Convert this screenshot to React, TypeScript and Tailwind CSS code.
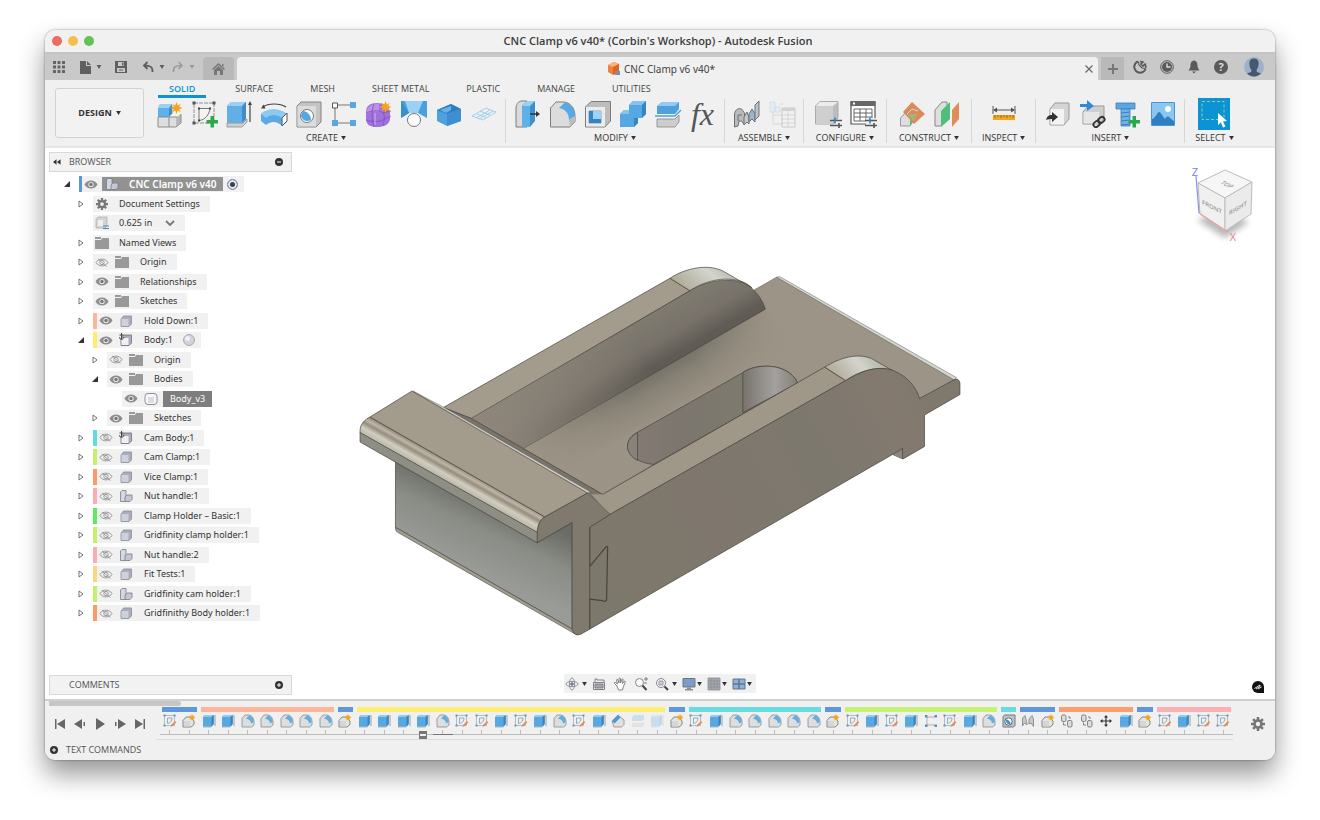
import React from 'react';

type IconProps = { className?: string };

const Svg: React.FC<{ box?: string; className?: string; children: React.ReactNode }> = ({ box = '0 0 28 28', className = 'h-7 w-7', children }) => (
  <svg viewBox={box} className={`block shrink-0 ${className}`} fill="none" aria-hidden="true">
    {children}
  </svg>
);

const Star: React.FC<{ x: number; y: number; s?: number }> = ({ x, y, s = 1 }) => (
  <path
    transform={`translate(${x} ${y}) scale(${s})`}
    d="M0-6 1.3-2.6 4.3-4.3 2.7-1.3 6 0 2.7 1.3 4.3 4.3 1.3 2.6 0 6-1.3 2.6-4.3 4.3-2.7 1.3-6 0-2.7-1.3-4.3-4.3-1.3-2.6Z"
    fill="#f5a31a"
  />
);

const Caret: React.FC<IconProps> = ({ className = 'h-1 w-[5px] text-[#333]' }) => (
  <svg viewBox="0 0 6 5" className={`block shrink-0 ${className}`} aria-hidden="true">
    <path d="M0 0h6L3 5z" fill="currentColor" />
  </svg>
);

/* ---------- Ribbon icons ---------- */

const NewComponentIcon = () => (
  <Svg>
    <path d="M14 17V8h2l2-3v9l5 0v9l-4 4H3V17z" fill="#c9c9c9" />
    <path d="M3 8C3 6 4 4 6 4h11l-3 4z" fill="#9bd0f2" />
    <path d="M3 8h11v9H3z" fill="#5fb0e8" />
    <path d="M14 8v9l3-3V4z" fill="#3f8ecb" />
    <path d="M3 17h18v10H3z" fill="#dedede" />
    <path d="m14 17 3-3h9l-4 3z" fill="#f2f2f2" />
    <path d="m22 17 4-3v8l-5 5z" fill="#b5b5b5" />
    <path d="M3 17v10h18l5-4v-9M14 17v10M3 17h19" stroke="#8c8c8c" />
    <Star x={21.5} y={8} />
  </Svg>
);

const SketchIcon = () => (
  <Svg>
    <path d="M4 3h20v20H4z" stroke="#777" strokeWidth=".8" strokeDasharray="4 1" />
    <path d="M2.500 1.500h3v3h-3zM22.500 1.500h3v3h-3zM2.500 21.500h3v3h-3z" fill="#555" />
    <path d="M9 8.500v12C15 20 19 15 20 8.500z" fill="#f4f4f4" stroke="#777" />
    <path d="M8 7.500h2v2H8zM19 7.500h2v2h-2zM8 19.500h2v2H8z" fill="#444" />
    <path d="M20.500 16h3.500v4h4v3.500h-4v4h-3.500v-4h-4V20h4z" fill="#2ba84a" />
  </Svg>
);

const ExtrudeIcon = () => (
  <Svg>
    <path d="M2 23h16l4-4v3l-5 5H2z" fill="#cfcfcf" stroke="#8e8e8e" strokeWidth=".8" />
    <path d="M2 6 6 2h15v17l-4 4H2z" fill="#62afe6" />
    <path d="M2 6 6 2h15l-4 4z" fill="#9ad0f3" />
    <path d="M17 6v17l4-4V2z" fill="#3f8ecb" />
    <path d="M25 22V4" stroke="#444" strokeWidth="1.200" />
    <path d="m25 1 2 4h-4z" fill="#444" />
  </Svg>
);

const RevolveIcon = () => (
  <Svg>
    <path d="M1 14C7 8 20 8 27 14v8l-5 4c-5-5-11-5-16-1l-5-4z" fill="#5aaae4" />
    <path d="M1 14C7 8 20 8 27 14l-5 4c-5-4-11-4-16 0z" fill="#8ec9f2" />
    <path d="m22 18 5-5v8l-5 5z" fill="#fff" stroke="#555" />
    <path d="M3 7C8 3 20 3 26 7" stroke="#444" strokeWidth="1.200" />
    <path d="M1 8.500 3.500 4.500l2 4z" fill="#444" />
  </Svg>
);

const HoleIcon = () => (
  <Svg>
    <path d="M2 6 6 2h20v20l-5 5H2z" fill="#c4c4c4" stroke="#858585" />
    <path d="M2.500 6H21v20.500H2.500z" fill="#dcdcdc" />
    <circle cx="12" cy="16" r="6.500" fill="#fff" stroke="#777" />
    <path d="M8 11c4 0 8 4 8 9-5 3-10-1-10-5z" fill="#56a7e2" />
  </Svg>
);

const PatternIcon = () => (
  <Svg>
    <path d="M5 5h18M5 5v18M5 23h18" stroke="#777" />
    <path d="M2.500 3h5v5h-5z" fill="#fff" stroke="#555" />
    <path d="M20 2h6v6h-6zM2 20h6v6H2zM20 20h6v6h-6z" fill="#5aa6e0" />
  </Svg>
);

const FormIcon = () => (
  <Svg>
    <path d="M1 12c0-6 4-9 11-9s12 3 13 9v8c-2 5-6 7-13 7S2 25 1 20z" fill="#a272dc" />
    <path d="M2 10c2-5 7-7 12-6v8c-5-1-9 0-13 2z" fill="#ba92e8" />
    <path d="M1 13c7-3 14-3 17 0s0 11 0 13M9 4c-3 6-2 16 0 23M1 20c6 2 14 2 17 0l8-4M18 13l8-2" stroke="#7a4cb8" strokeWidth=".7" />
    <path d="M10 13v12" stroke="#cfaef2" />
    <Star x={20.500} y={7} />
  </Svg>
);

const SheetIcon = () => (
  <Svg>
    <path d="M1 1h26v17L18 13H9l-8 5z" fill="#4a9fdd" />
    <path d="M5 1h18l-5 12H9z" fill="#9ad1f4" />
    <path d="M1 1v17l8-5z" fill="#3b8ecd" />
    <circle cx="14" cy="20" r="6.500" fill="#fff" stroke="#777" />
  </Svg>
);

const BossIcon = () => (
  <Svg>
    <path d="m2 10 14-6 10 5v12L12 26 2 21z" fill="#4fa0dc" />
    <path d="m2 10 14-6 10 5-14 5z" fill="#2f7fc0" />
    <path d="m5 10 11-4v4l-5 3z" fill="#69b3e8" />
    <path d="m12 14 14-5v12l-14 5z" fill="#3c8fd0" />
  </Svg>
);

const GridPatternIcon = () => (
  <Svg>
    <path d="m2 16 14-8 10 4-13 8zM6 13.500l10 4M10 11l10 4M6 18l14-8M9 19l14-8" stroke="#9bcbec" strokeWidth=".9" />
  </Svg>
);

const PressPullIcon = () => (
  <Svg>
    <path d="M2 7C3 3 5 1 8 1h5v26H2z" fill="#dadada" stroke="#7d7d7d" />
    <path d="M8 6 13 1h8v20l-5 6H8z" fill="#3f8fce" />
    <path d="M8 6h8v21H8z" fill="#5fb0e8" />
    <path d="M8 6 13 1h8l-5 5z" fill="#9bd0f3" />
    <path d="M16 14h7" stroke="#333" strokeWidth="1.300" />
    <path d="m22 11 4 3-4 3z" fill="#333" />
  </Svg>
);

const FilletIcon = () => (
  <Svg>
    <path d="M1.500 8 7 2h7c7 0 12 6 12 14v6l-5 5H1.500z" fill="#dcdcdc" stroke="#7d7d7d" />
    <path d="M10 8 16 2.500C23 4 26 10 26 16l-6 4c0-7-4-11-10-12z" fill="#56a9e4" />
    <path d="M20 20l6-4v6l-5 5z" fill="#bcbcbc" />
  </Svg>
);

const ShellIcon = () => (
  <Svg>
    <path d="M1.500 7 7 1.500h19.500V21L21 27H1.500z" fill="#bdbdbd" stroke="#7d7d7d" />
    <path d="M2 7h19v19.500H2z" fill="#ececec" />
    <path d="M5 11h12v12H5z" fill="#fff" stroke="#888" strokeWidth=".8" />
    <path d="M5 11h4v8h8v4H5z" fill="#2f86c8" />
    <path d="M9 11h8v8H9z" fill="#9fd3f5" />
  </Svg>
);

const CombineIcon = () => (
  <Svg>
    <path d="M10 5 14 1h13v13l-4 4h-4v5l-4 4H1V14l4-4h5z" fill="#56a8e2" />
    <path d="M10 5 14 1h13l-4 4zM1 14l4-4h5v4z" fill="#86c4ef" />
    <path d="M23 5v13l4-4V1zM15 18v9l4-4v-5z" fill="#3585c6" />
  </Svg>
);

const SplitIcon = () => (
  <Svg>
    <path d="M3 6 8 2h17v7l-4 5H3z" fill="#4fa0dd" />
    <path d="M3 6 8 2h17l-4 4z" fill="#93ccf2" />
    <path d="M1 16h20l6-6" stroke="#4fa0dd" strokeWidth="1.500" />
    <path d="M3 19h18l4-4v7l-4 5H3z" fill="#cdcdcd" stroke="#858585" strokeWidth=".8" />
  </Svg>
);

const FxIcon = () => <span className="font-['Liberation_Serif',serif] text-[32px] leading-7 text-[#555] italic">fx</span>;

const JointIcon = () => (
  <Svg>
    <path d="M1.500 27V14c1-5 4-6 7-5l3 4v12l-3-4H6l-1 5z" fill="#b8bcbf" stroke="#6d7073" />
    <path d="M5 21v-6h4" stroke="#6d7073" />
    <path d="m11 17 3-5 2 6v6l-2-2-3 3z" fill="#c6cacd" stroke="#6d7073" />
    <path d="m16 14 3-5 3 5v8l-3-3-3 3z" fill="#9db6ca" stroke="#6d7073" />
    <path d="m22 5 4-4v15l-4 4z" fill="#b9c4cc" stroke="#6d7073" />
  </Svg>
);

const TableFadedIcon = () => (
  <Svg>
    <g opacity=".45">
      <path d="M5 8v16h9M5 15h9M12 4h3" stroke="#bbb" />
      <path d="M2 2h5v10H2zM7 7h5v5H7z" fill="#d5e6f4" stroke="#9dbfda" strokeWidth=".7" />
      <path d="M14 8h13v19H14z" fill="#f2f2f2" stroke="#999" />
      <path d="M14 8h13v3H14z" fill="#aaa" />
      <path d="M14 15h13M14 19h13M14 23h13M20 11v16" stroke="#999" strokeWidth=".7" />
    </g>
  </Svg>
);

const Sliders = () => (
  <>
    <path d="M16 20.500h12M16 25.500h12" stroke="#555" strokeWidth="1.300" />
    <path d="M21 17.500v6" stroke="#2c87c8" strokeWidth="1.600" />
    <path d="M25 23v5" stroke="#555" strokeWidth="1.600" />
  </>
);

const ConfigBoxIcon = () => (
  <Svg>
    <path d="M1.500 6 6 1.500h18V18l-5 6H1.500z" fill="#bdbdbd" stroke="#aaa" />
    <path d="M2 6h17v18H2z" fill="#cfcfcf" />
    <path d="M2 6 6 2h18l-5 4z" fill="#ececec" />
    <Sliders />
  </Svg>
);

const ConfigTableIcon = () => (
  <Svg>
    <path d="M2 2h24v22H2z" fill="#fff" stroke="#555" strokeWidth="1.200" />
    <path d="M1.500 1h25v5h-25z" fill="#666" />
    <path d="M4 2.500h2v2H4z" fill="#fff" />
    <path d="M5 9h18v12H5zM5 13h18M5 17h18M11 9v12M17 9v12" stroke="#666" />
    <path d="M17 18h11v10H17z" fill="#f0f0f0" />
    <Sliders />
  </Svg>
);

const PlaneIcon = () => (
  <Svg>
    <path d="M2.500 18 7 13h8v8l-3 5H2.500z" fill="#dedede" stroke="#999" />
    <path d="M12 17v9l3-4v-8z" fill="#54c27f" />
    <path d="M14 2 27 14 16 24 5 12z" fill="#dd8a5a" />
    <path d="M9 14h10l-3 7z" fill="#8fbf8f" opacity=".75" />
    <path d="M9 14 14 9l6 2" stroke="#c8e0c8" />
  </Svg>
);

const MidplaneIcon = () => (
  <Svg>
    <path d="M2 10 9 2h5v18l-6 6H2z" fill="#dedede" stroke="#888" />
    <path d="M8 11 17 2v17l-9 8z" fill="#4dbf7b" />
    <path d="m19 10 7-8v17l-7 8z" fill="#e08b58" />
  </Svg>
);

const MeasureIcon = () => (
  <Svg>
    <path d="M3 6v8M25 6v8M4 10h20" stroke="#555" />
    <path d="m3 10 4-2.500v5zM25 10l-4-2.500v5z" fill="#555" />
    <path d="M3 15h22v5H3z" fill="#f2a51f" />
    <path d="M5 15v3M8 15v2M11 15v3M14 15v2M17 15v3M20 15v2M23 15v3" stroke="#8a5a08" strokeWidth=".8" />
  </Svg>
);

const InsertBoxIcon = () => (
  <Svg>
    <path d="m6 9 5-6h14v16l-5 6H6z" fill="#d4d4d4" stroke="#999" />
    <path d="M6.500 9H20v15.500H6.500z" fill="#f3f3f3" />
    <path d="M2 20c1-4 3-5 6-5v-3l6 5-6 5v-3c-2 0-4 0-6 1z" fill="#333" />
  </Svg>
);

const InsertLinkIcon = () => (
  <Svg>
    <path d="m4 12 5-6h16v12l-4 6H4z" fill="#cfcfcf" stroke="#999" />
    <path d="M4.500 12H20v11.500H4.500z" fill="#e6e6e6" />
    <path d="M1 4h7V0l7 6-7 5V7H1z" fill="#2f8bd8" />
    <g transform="rotate(-40 20 22)" stroke="#333" strokeWidth="1.800">
      <rect x="13.500" y="19.500" width="7" height="5" rx="2.500" />
      <rect x="19.500" y="19.500" width="7" height="5" rx="2.500" />
    </g>
  </Svg>
);

const FastenerIcon = () => (
  <Svg>
    <path d="M2 3h19v6H2z" fill="#5aa6e0" stroke="#3b7fb8" strokeWidth=".8" />
    <path d="M7 9h9v17H7z" fill="#6db3e6" stroke="#3b7fb8" strokeWidth=".8" />
    <path d="m7 13 9-1M7 17l9-1M7 21l9-1M7 25l9-1" stroke="#3b7fb8" />
    <path d="M18.500 16h3.500v4h4v3.500h-4v4h-3.500v-4h-4V20h4z" fill="#2ba84a" />
  </Svg>
);

const CanvasIcon = () => (
  <Svg>
    <path d="M2.500 2.500h23v23h-23z" fill="#8ac6f2" stroke="#4b96cf" />
    <circle cx="19" cy="9" r="3" fill="#fff" />
    <path d="M3 19c4-1 5-7 7-7s4 5 6 7c2-3 3-3 5-1l4 3v4H3z" fill="#2f80c2" />
  </Svg>
);

const SelectIcon = () => (
  <span className="flex h-8 w-8 items-center justify-center bg-[#0c93d6]">
    <Svg box="0 0 32 32" className="h-8 w-8">
      <path d="M4 3.500h22v18H4z" stroke="#8fd18a" strokeDasharray="3 2" />
      <path d="m20 15 9 8-4 .5 2.500 5-2.500 1-2-5-3 2.500z" fill="#fff" />
    </Svg>
  </span>
);

/* ---------- Small icons ---------- */

const Eye: React.FC<{ off?: boolean }> = ({ off }) => (
  <svg viewBox="0 0 14 9" className="h-[9px] w-[14px]" fill="none" aria-hidden="true">
    {off ? (
      <>
        <path d="M1 4.500C3.500 0 10.500 0 13 4.500 10.500 9 3.500 9 1 4.500Z" stroke="#9b9b9b" />
        <circle cx="7" cy="4.500" r="2.200" stroke="#9b9b9b" />
        <path d="m3 1 8.500 7.500" stroke="#9b9b9b" />
      </>
    ) : (
      <>
        <path d="M.5 4.500C3-.8 11-.8 13.500 4.500 11 9.800 3 9.800.5 4.500Z" fill="#8e8e8e" />
        <circle cx="7" cy="4.500" r="2.600" fill="#eee" />
        <circle cx="7" cy="4.500" r="1.700" fill="#777" />
      </>
    )}
  </svg>
);

const Gear: React.FC<IconProps> = ({ className = 'h-3 w-3' }) => (
  <svg viewBox="-8 -8 16 16" className={className} aria-hidden="true">
    <circle r="4" fill="none" stroke="#777" strokeWidth="3" />
    <path d="M0-8v4M0 8V4M-8 0h4M8 0H4M-5.600-5.600-3-3M5.600 5.600 3 3M-5.600 5.600-3 3M5.600-5.600 3-3" stroke="#777" strokeWidth="3" />
  </svg>
);

const Folder = () => (
  <svg viewBox="0 0 14 12" className="h-3 w-[14px]" aria-hidden="true">
    <path d="M0 0h6v2H0zM7 1h7v11H0V3h6z" fill="#999" />
  </svg>
);

const Cube: React.FC<{ anchor?: boolean }> = ({ anchor }) => (
  <svg viewBox="0 0 14 14" className="h-[14px] w-[14px]" fill="none" aria-hidden="true">
    <path d="M2 5 4.500 2h8v8L10 12.500H2z" fill="#a9adbc" stroke={anchor ? '#6f6f76' : '#888c9a'} strokeWidth=".8" />
    <path d="M2.500 5H9.500v7h-7z" fill={anchor ? '#f0f0f2' : '#ced1dc'} />
    {anchor && <path d="M2.500 0v6M.5 2h4M0 4c.5 3 4.500 3 5 0" stroke="#444" />}
  </svg>
);

const Assembly = () => (
  <svg viewBox="0 0 14 14" className="h-[14px] w-[14px]" fill="none" aria-hidden="true">
    <path d="M1.500 3 3 1.500h4v11H1.500z" fill="#d5d8e0" stroke="#787c88" strokeWidth=".8" />
    <path d="M6 8 8 6h5v4.500L11 12.500H6z" fill="#c3c7d3" stroke="#787c88" strokeWidth=".8" />
  </svg>
);

const BodyShape = () => (
  <svg viewBox="0 0 14 14" className="h-[14px] w-[14px]" fill="none" aria-hidden="true">
    <rect x="1" y="1.500" width="12" height="11" rx="3" fill="#f8f8fa" stroke="#8e8e96" />
    <path d="M4 5h6v6H4z" fill="#dcdde3" />
  </svg>
);

const ConfigSmall = () => (
  <svg viewBox="0 0 14 14" className="h-[14px] w-[14px]" fill="none" aria-hidden="true">
    <path d="M1 3 3 1h9v9l-2 2H1z" fill="#d3d3d3" stroke="#b2b2b2" strokeWidth=".8" />
    <path d="M3 4h5v6H3z" fill="#efefef" />
    <path d="M8 10h6M8 12.500h6" stroke="#4c86b5" />
  </svg>
);

const Twist: React.FC<{ open?: boolean }> = ({ open }) => (
  <svg viewBox="0 0 8 8" className="h-2 w-2" fill="none" aria-hidden="true">
    {open ? <path d="M7 1v6H1z" fill="#333" /> : <path d="M2 1v6l4-3z" stroke="#666" strokeWidth=".9" />}
  </svg>
);

/* ---------- Timeline icons ---------- */

const tl = 'h-[14px] w-[14px]';

const TlSketch = () => (
  <Svg box="0 0 14 14" className={tl}>
    <path d="M1.500 1.500h10v10h-10z" stroke="#9db0bf" strokeWidth=".8" />
    <path d="M.5.500h2v2h-2zM10.500.500h2v2h-2zM.5 10.500h2v2h-2z" fill="#6f93ad" />
    <path d="M4.500 4h4.500C9 7 7.500 9 4.500 9.500z" stroke="#7b9cb5" strokeWidth=".8" />
    <path d="m7.500 13 1-2.500L12 7l1.300 1.300-3.500 3.700z" fill="#ea8a52" />
  </Svg>
);

const TlComp = () => (
  <Svg box="0 0 14 14" className={tl}>
    <path d="M1 6.500 4 3h4l4 4v3.500L9 13H1z" fill="#e4e4e4" stroke="#7a7a7a" strokeWidth=".9" />
    <path d="M2 7h6v5.500H2z" fill="#d6d6d6" />
    <Star x={10} y={3.500} s={0.6} />
  </Svg>
);

const TlExtrude = () => (
  <Svg box="0 0 14 14" className={tl}>
    <path d="M1 12h8l2-2v1l-2 2.500H1z" fill="#b5b5b5" />
    <path d="M1 3 3 1h9v9l-2.500 2.500H1z" fill="#58a9e2" />
    <path d="M1 3 3 1h9l-2.500 2z" fill="#8fcbf2" />
    <path d="M9.500 3 11.500 1v9l-2 2.500z" fill="#3c83bc" />
    <path d="M13 1v11" stroke="#888" strokeWidth=".8" />
  </Svg>
);

const TlFillet = () => (
  <Svg box="0 0 14 14" className={tl}>
    <path d="M1 4.500 4 1h3.500C11 1 13 4.500 13 8v3l-2.500 2H1z" fill="#dedede" stroke="#8a8a8a" strokeWidth=".8" />
    <path d="M5 4.500 8 1.500C11 2 12.800 5 12.800 8L10 9.500C10 7 8 5 5 4.500z" fill="#62aee2" />
  </Svg>
);

const TlChamfer = () => (
  <Svg box="0 0 14 14" className={tl}>
    <path d="m1 7 6-6 6 5v4.500L10.500 13H3z" fill="#e1e1e1" stroke="#8a8a8a" strokeWidth=".8" />
    <path d="m1 7 6-6 2.500 2.500L3.500 9.500z" fill="#4a9bd8" />
  </Svg>
);

const TlSplit = () => (
  <Svg box="0 0 14 14" className="h-[14px] w-[14px] opacity-25">
    <path d="M1 3 3 1h10v4l-2 2H1z" fill="#5ab0e8" />
    <path d="M1 9h10l2-2v4l-2 2H1z" fill="#bbb" />
  </Svg>
);

const TlFaded = () => (
  <div className="opacity-25">
    <TlExtrude />
  </div>
);

const TlPattern = () => (
  <Svg box="0 0 14 14" className={tl}>
    <path d="M3 3h8M3 3v8h8" stroke="#999" strokeWidth=".7" />
    <path d="M1 1h2.500v2.500H1zM10.500 1H13v2.500h-2.500zM1 10.500h2.500V13H1zM10.500 10.500H13V13h-2.500z" fill="#5f8fb8" />
  </Svg>
);

const TlHole = () => (
  <Svg box="0 0 14 14" className={tl}>
    <path d="M1 2.500 2.500 1H13v10.500L11.500 13H1z" fill="#bcc3c9" stroke="#70787e" />
    <circle cx="6.500" cy="7.500" r="3.700" fill="#fff" stroke="#60686e" />
    <path d="M4 5.500c2 0 5 2 4.500 5-3 0-5-2-4.500-5z" fill="#4a90c8" />
  </Svg>
);

const TlJoint = () => (
  <Svg box="0 0 14 14" className={tl}>
    <path d="M1.500 12V4L4 1.500 6 9v2L3.500 9zM8 10V5l3-3.500L12.500 5v7.500L10 9z" fill="#c9c9c9" stroke="#808080" strokeWidth=".8" />
  </Svg>
);

const TlLink = () => (
  <Svg box="0 0 14 14" className={tl}>
    <rect x="1.500" y="1" width="4.500" height="6.500" rx="1.500" fill="#ddd" stroke="#777" strokeWidth=".9" />
    <rect x="7.500" y="6.500" width="4.500" height="6.500" rx="1.500" fill="#ddd" stroke="#777" strokeWidth=".9" />
    <path d="M3.500 8.500V11H6M8 3h2v2" stroke="#777" strokeWidth=".9" />
  </Svg>
);

const TlMove = () => (
  <Svg box="0 0 14 14" className={tl}>
    <path d="M7 2v10M2 7h10" stroke="#333" strokeWidth="1.200" />
    <path d="m7 1 2 2.500H5zM7 13l2-2.500H5zM1 7l2.500-2v4zM13 7l-2.500-2v4z" fill="#333" />
  </Svg>
);

/* ---------- Data ---------- */

const ribbonTabs = ['SOLID', 'SURFACE', 'MESH', 'SHEET METAL', 'PLASTIC', 'MANAGE', 'UTILITIES'];

const ribbonGroups: { name: string; pad: string; icons: [string, React.FC][] }[] = [
  {
    name: 'CREATE',
    pad: 'px-1',
    icons: [
      ['New Component', NewComponentIcon],
      ['Create Sketch', SketchIcon],
      ['Extrude', ExtrudeIcon],
      ['Revolve', RevolveIcon],
      ['Hole', HoleIcon],
      ['Rectangular Pattern', PatternIcon],
      ['Create Form', FormIcon],
      ['Flange', SheetIcon],
      ['Boss', BossIcon],
      ['Geometric Pattern', GridPatternIcon],
    ],
  },
  {
    name: 'MODIFY',
    pad: 'px-1',
    icons: [
      ['Press Pull', PressPullIcon],
      ['Fillet', FilletIcon],
      ['Shell', ShellIcon],
      ['Combine', CombineIcon],
      ['Split Body', SplitIcon],
      ['Change Parameters', FxIcon],
    ],
  },
  { name: 'ASSEMBLE', pad: 'px-1', icons: [['Joint', JointIcon], ['Drive Joints', TableFadedIcon]] },
  { name: 'CONFIGURE', pad: 'px-[6px]', icons: [['Configure', ConfigBoxIcon], ['Configuration Table', ConfigTableIcon]] },
  { name: 'CONSTRUCT', pad: 'px-[7px]', icons: [['Offset Plane', PlaneIcon], ['Midplane', MidplaneIcon]] },
  { name: 'INSPECT', pad: 'px-[10px]', icons: [['Measure', MeasureIcon]] },
  {
    name: 'INSERT',
    pad: 'px-1',
    icons: [
      ['Insert Derive', InsertBoxIcon],
      ['Insert Link', InsertLinkIcon],
      ['Insert Fastener', FastenerIcon],
      ['Canvas', CanvasIcon],
    ],
  },
  { name: 'SELECT', pad: 'px-[10px]', icons: [['Select', SelectIcon]] },
];

type Node = {
  label: string;
  depth: 1 | 2 | 3;
  twist?: 'open' | 'closed';
  bar?: string;
  eye?: 'on' | 'off';
  icon: React.FC;
  selected?: boolean;
  sphere?: boolean;
  units?: boolean;
};

const Anchored = () => <Cube anchor />;

const nodes: Node[] = [
  { label: 'Document Settings', depth: 1, twist: 'closed', icon: Gear },
  { label: '0.625 in', depth: 1, icon: ConfigSmall, units: true },
  { label: 'Named Views', depth: 1, twist: 'closed', icon: Folder },
  { label: 'Origin', depth: 1, twist: 'closed', eye: 'off', icon: Folder },
  { label: 'Relationships', depth: 1, twist: 'closed', eye: 'on', icon: Folder },
  { label: 'Sketches', depth: 1, twist: 'closed', eye: 'on', icon: Folder },
  { label: 'Hold Down:1', depth: 1, twist: 'closed', bar: 'bg-[#fcb59c]', eye: 'on', icon: Cube },
  { label: 'Body:1', depth: 1, twist: 'open', bar: 'bg-[#fcee6c]', eye: 'on', icon: Anchored, sphere: true },
  { label: 'Origin', depth: 2, twist: 'closed', eye: 'off', icon: Folder },
  { label: 'Bodies', depth: 2, twist: 'open', eye: 'on', icon: Folder },
  { label: 'Body_v3', depth: 3, eye: 'on', icon: BodyShape, selected: true },
  { label: 'Sketches', depth: 2, twist: 'closed', eye: 'on', icon: Folder },
  { label: 'Cam Body:1', depth: 1, twist: 'closed', bar: 'bg-[#5fdce0]', eye: 'off', icon: Anchored },
  { label: 'Cam Clamp:1', depth: 1, twist: 'closed', bar: 'bg-[#c3f26a]', eye: 'off', icon: Cube },
  { label: 'Vice Clamp:1', depth: 1, twist: 'closed', bar: 'bg-[#fd9a68]', eye: 'off', icon: Cube },
  { label: 'Nut handle:1', depth: 1, twist: 'closed', bar: 'bg-[#fbadb1]', eye: 'off', icon: Assembly },
  { label: 'Clamp Holder – Basic:1', depth: 1, twist: 'closed', bar: 'bg-[#5cec5c]', eye: 'off', icon: Cube },
  { label: 'Gridfinity clamp holder:1', depth: 1, twist: 'closed', bar: 'bg-[#c3f26a]', eye: 'off', icon: Cube },
  { label: 'Nut handle:2', depth: 1, twist: 'closed', bar: 'bg-[#fbadb1]', eye: 'off', icon: Assembly },
  { label: 'Fit Tests:1', depth: 1, twist: 'closed', bar: 'bg-[#fcd67c]', eye: 'off', icon: Cube },
  { label: 'Gridfinity cam holder:1', depth: 1, twist: 'closed', bar: 'bg-[#c3f26a]', eye: 'off', icon: Assembly },
  { label: 'Gridfinithy Body holder:1', depth: 1, twist: 'closed', bar: 'bg-[#fd9a68]', eye: 'off', icon: Cube },
];

const indent = { 1: 'pl-[29px]', 2: 'pl-[43px]', 3: 'pl-[58px]' };

// s sketch, c component, e extrude, f fillet, h chamfer, x/y suppressed, p pattern, o hole, j joint, l link, m move
const segments = [
  { color: 'bg-[#5e97dc]', steps: 'sc' },
  { color: 'bg-[#fdb59c]', steps: 'eefffff' },
  { color: 'bg-[#5e97dc]', steps: 'c' },
  { color: 'bg-[#fbee70]', steps: 'eeeefssesefsehxy' },
  { color: 'bg-[#5e97dc]', steps: 'c' },
  { color: 'bg-[#68dde0]', steps: 'sefffff' },
  { color: 'bg-[#5e97dc]', steps: 'c' },
  { color: 'bg-[#c5f273]', steps: 'sesepsef' },
  { color: 'bg-[#68dde0]', steps: 'o' },
  { color: 'bg-[#5e97dc]', steps: 'jc' },
  { color: 'bg-[#fd9e6c]', steps: 'llme' },
  { color: 'bg-[#5e97dc]', steps: 'c' },
  { color: 'bg-[#fbb0b3]', steps: 'sess' },
];

const stepIcons: Record<string, React.FC> = {
  s: TlSketch,
  c: TlComp,
  e: TlExtrude,
  f: TlFillet,
  h: TlChamfer,
  x: TlSplit,
  y: TlFaded,
  p: TlPattern,
  o: TlHole,
  j: TlJoint,
  l: TlLink,
  m: TlMove,
};

const MARKER = 13;

/* ---------- Sections ---------- */

const TitleBar = () => (
  <header className="relative flex h-6 shrink-0 items-center border-b-2 border-[#c4c4c4] bg-[#f1f1f1] px-[7px]">
    <div className="flex gap-[6px]">
      <button aria-label="Close window" className="h-[10px] w-[10px] rounded-full bg-[#ec6a5e]" />
      <button aria-label="Minimize window" className="h-[10px] w-[10px] rounded-full bg-[#f4bf4f]" />
      <button aria-label="Zoom window" className="h-[10px] w-[10px] rounded-full bg-[#61c454]" />
    </div>
    <h1 className="flex-1 pr-[46px] text-center text-[11px] leading-4 font-semibold text-[#3c3c3c]">
      CNC Clamp v6 v40* (Corbin's Workshop) - Autodesk Fusion
    </h1>
  </header>
);

const DocumentBar = () => (
  <div className="flex h-[26px] shrink-0 items-end bg-[#c9c9c9]">
    <div className="flex h-[26px] w-[158px] shrink-0 items-center gap-[5px] pl-2">
      <button aria-label="Data panel" className="mr-[10px]">
        <Svg box="0 0 12 12" className="h-3 w-3">
          <path d="M0 0h3v3H0zM4.500 0h3v3h-3zM9 0h3v3H9zM0 4.500h3v3H0zM4.500 4.500h3v3h-3zM9 4.500h3v3H9zM0 9h3v3H0zM4.500 9h3v3h-3zM9 9h3v3H9z" fill="#666" />
        </Svg>
      </button>
      <button aria-label="File" className="mr-2 flex items-center gap-[5px]">
        <Svg box="0 0 11 13" className="h-[13px] w-[11px]">
          <path d="M0 0h6v5h5v8H0zM7 0l4 4H7z" fill="#5f5f5f" />
        </Svg>
        <Caret className="h-1 w-[6px] text-[#5f5f5f]" />
      </button>
      <button aria-label="Save" className="mr-[10px]">
        <Svg box="0 0 12 12" className="h-3 w-3">
          <path d="M0 0h12v12H0z" fill="#5f5f5f" />
          <path d="M3 1h6v4H3zM2 7h8v4H2z" fill="#c9c9c9" />
          <path d="M7 1.500h1.500v3H7zM4 8.500h4v1H4z" fill="#5f5f5f" />
        </Svg>
      </button>
      <button aria-label="Undo" className="flex items-center gap-[5px]">
        <Svg box="0 0 12 12" className="h-3 w-3">
          <path d="M10.500 11C11 6 8 4.500 3 4.500M5.500 1 2 4.500 5.500 8" stroke="#5f5f5f" strokeWidth="1.800" />
        </Svg>
        <Caret className="h-1 w-[6px] text-[#5f5f5f]" />
      </button>
      <button aria-label="Redo" className="ml-[2px] flex items-center gap-[5px]">
        <Svg box="0 0 12 12" className="h-3 w-3">
          <path d="M1.500 11C1 6 4 4.500 9 4.500M6.500 1 10 4.500 6.500 8" stroke="#9a9a9a" strokeWidth="1.500" />
        </Svg>
        <Caret className="h-1 w-[6px] text-[#9a9a9a]" />
      </button>
    </div>
    <button aria-label="Home" className="mr-[3px] flex h-[23px] w-[31px] shrink-0 items-center justify-center rounded-t-sm bg-[#b9b9b9]">
      <Svg box="0 0 13 12" className="h-3 w-[13px]">
        <path d="M6.500 0 13 6l-1 1-5.500-5L1 7 0 6zM10 1h1.500v3L10 2.500zM2 7l4.500-4L11 7v5H8V8H5v4H2z" fill="#777" />
      </Svg>
    </button>
    <div className="flex h-[23px] flex-1 items-center rounded-t-sm bg-[#f0f0f0] pr-[5px]">
      <div className="flex flex-1 items-center justify-center gap-1">
        <Svg box="0 0 13 13" className="h-[13px] w-[13px]">
          <path d="m1 3 6-3 5 2v8l-6 3-5-3z" fill="#f0803c" />
          <path d="m1 3 6-3 5 2-6 3z" fill="#fbb27c" />
          <path d="m6 5 6-3v8l-6 3z" fill="#de6420" />
          <path d="M8 9h5v4H8z" fill="#7b8fa6" />
        </Svg>
        <span className="font-['Noto_Sans',sans-serif] text-[10px] leading-4 text-[#444]">CNC Clamp v6 v40*</span>
      </div>
      <button aria-label="Close tab">
        <Svg box="0 0 8 8" className="h-2 w-2">
          <path d="m.5.500 7 7M7.500.500l-7 7" stroke="#666" strokeWidth="1.200" />
        </Svg>
      </button>
    </div>
    <button aria-label="New tab" className="ml-[3px] flex h-[23px] w-[23px] items-center justify-center bg-[#b9b9b9]">
      <Svg box="0 0 10 10" className="h-[10px] w-[10px]">
        <path d="M5 0v10M0 5h10" stroke="#777" strokeWidth="2" />
      </Svg>
    </button>
    <div className="flex h-[26px] w-[151px] items-center gap-[13px] pl-[9px]">
      <button aria-label="Extensions">
        <Svg box="0 0 14 14" className="h-[14px] w-[14px]">
          <path d="M5 1.500a5.800 5.800 0 1 0 7.500 7.500" stroke="#5a5a5a" strokeWidth="2" />
          <path d="M12.700 8A6 6 0 0 0 12 4l-2 2-2-2 2-2a6 6 0 0 0-3-.5" stroke="#5a5a5a" strokeWidth="1.600" />
          <path d="M5.500 1.500 6 5l3 3 3.500.5" stroke="#5a5a5a" strokeWidth="1.200" />
        </Svg>
      </button>
      <button aria-label="Job status">
        <Svg box="0 0 14 14" className="h-[14px] w-[14px]">
          <circle cx="7" cy="7" r="6.300" stroke="#5a5a5a" />
          <circle cx="7" cy="7" r="5" fill="#5a5a5a" />
          <path d="M7 3.500V7h3.500" stroke="#ddd" strokeWidth="1.400" />
        </Svg>
      </button>
      <button aria-label="Notifications">
        <Svg box="0 0 14 14" className="h-[14px] w-[14px]">
          <path d="M7 .5c3 .5 3.500 3 3.500 5S11.500 9 12.500 10.500h-11C2.500 9 3.500 7.500 3.500 5.500S4 1 7 .5ZM5 11.500h4l-2 2z" fill="#5a5a5a" />
        </Svg>
      </button>
      <button aria-label="Help" className="mr-[3px] flex h-[14px] w-[14px] items-center justify-center rounded-full bg-[#5a5a5a] text-[11px] leading-[14px] font-bold text-[#ddd]">
        ?
      </button>
      <button aria-label="Account">
        <Svg box="0 0 20 20" className="h-5 w-5">
          <circle cx="10" cy="10" r="10" fill="#9db1cc" />
          <path d="M10 1.500c4 0 5 3 4.500 6.500-.3 3-1.500 4-2 5l.5 2 4 1.500c-4 4-10 4-14 0L7 15l.5-2c-1-1-1.700-2-2-5C5 4.500 6 1.500 10 1.500Z" fill="#46586f" />
        </Svg>
      </button>
    </div>
  </div>
);

const Ribbon = () => (
  <div className="flex h-[68px] shrink-0 border-b-2 border-[#e6e6e6] bg-[#f0f0f0]">
    <button className="mt-2 mr-[3px] ml-[10px] flex h-[50px] w-[89px] shrink-0 items-center justify-center gap-1 rounded-[3px] border border-[#d2d2d2] bg-[#f2f2f2] text-[9px] font-bold text-[#333]">
      DESIGN <Caret />
    </button>
    <div className="flex-1">
      <nav className="flex gap-[15px] pl-[11px]">
        {ribbonTabs.map((tab, i) => (
          <a
            key={tab}
            href="#"
            className={`block h-[18px] border-b-[3px] px-[11px] pt-[3px] text-[9px] leading-3 whitespace-nowrap first:mr-[3px] ${
              i === 0 ? 'border-[#0d93d2] font-semibold text-[#0d93d2]' : 'border-transparent text-[#444]'
            }`}
          >
            {tab}
          </a>
        ))}
      </nav>
      <div className="mt-px flex h-[44px]">
        {ribbonGroups.map(({ name, pad, icons }) => (
          <section key={name} className={`flex shrink-0 flex-col items-center border-r border-[#d6d6d6] last:border-r-0 ${pad}`}>
            <div className="flex h-[30px]">
              {icons.map(([label, Icon]) => (
                <button key={label} aria-label={label} className="flex h-[30px] w-[35px] items-center justify-center">
                  <Icon />
                </button>
              ))}
            </div>
            <button className="mt-[3px] flex items-center gap-[3px] text-[9px] leading-3 whitespace-nowrap text-[#333]">
              {name} <Caret />
            </button>
          </section>
        ))}
      </div>
    </div>
  </div>
);

const TreeRow: React.FC<{ node: Node }> = ({ node }) => {
  const Icon = node.icon;
  return (
    <li className={`flex h-4 items-center ${indent[node.depth]}`}>
      {node.twist ? (
        <button aria-label={`Toggle ${node.label}`} className="mr-[5px] flex w-[14px] justify-center">
          <Twist open={node.twist === 'open'} />
        </button>
      ) : (
        <span className="mr-[5px] w-[14px]" />
      )}
      <div className={`flex h-4 items-center bg-[#f1f1f1] ${node.selected ? '' : 'pr-[10px]'}`}>
        {node.bar && <span className={`h-4 w-1 ${node.bar}`} />}
        {node.eye && (
          <button aria-label={`Visibility of ${node.label}`} className="flex w-[17px] justify-center">
            <Eye off={node.eye === 'off'} />
          </button>
        )}
        <span className={`flex justify-center ${node.eye ? 'w-[23px]' : 'mr-[2px] w-[17px]'}`}>
          <Icon />
        </span>
        {node.units ? (
          <label className="flex items-center pl-[7px]">
            <select aria-label="Configuration size" className="w-[46px] appearance-none">
              <option>{node.label}</option>
            </select>
            <Svg box="0 0 10 6" className="h-[6px] w-[10px]">
              <path d="m1 1 4 4 4-4" stroke="#777" strokeWidth="1.800" />
            </Svg>
          </label>
        ) : (
          <span className={node.selected ? 'ml-px h-4 bg-[#7e7e7e] px-[7px] text-white' : 'pl-[7px]'}>{node.label}</span>
        )}
        {node.sphere && (
          <Svg box="0 0 12 12" className="-mr-1 ml-[10px] h-3 w-3">
            <circle cx="6" cy="6" r="5.500" fill="#d0d2dc" stroke="#9a9ca6" strokeWidth=".8" />
            <circle cx="4.500" cy="4.500" r="2.500" fill="#f0f0f6" />
          </Svg>
        )}
      </div>
    </li>
  );
};

const Browser = () => (
  <aside className="relative z-10 flex w-[247px] flex-col justify-between pt-1 pb-1 text-[#333]">
    <div>
      <div className="ml-1 flex h-5 items-center border border-[#d9d9d9] bg-[#f2f2f2] px-[3px] text-[9px] text-[#555]">
        <button aria-label="Collapse browser">
          <Svg box="0 0 9 6" className="h-[6px] w-2">
            <path d="M4 0v6L0 3zM8.500 0v6l-4-3z" fill="#333" />
          </Svg>
        </button>
        <h2 className="flex-1 pl-2">BROWSER</h2>
        <button aria-label="Hide browser" className="mr-[5px]">
          <Svg box="0 0 8 8" className="h-2 w-2">
            <circle cx="4" cy="4" r="4" fill="#333" />
            <path d="M2 4h4" stroke="#fff" />
          </Svg>
        </button>
      </div>
      <ul className="mt-1 flex h-[445px] flex-col justify-between font-['Noto_Sans',sans-serif] text-[9px] leading-4 whitespace-nowrap">
        <li className="flex h-4 items-center pl-[15px]">
          <button aria-label="Toggle document" className="mr-[5px] flex w-[14px] justify-center">
            <Twist open />
          </button>
          <div className="flex h-4 items-center bg-[#f1f1f1] pr-[6px]">
            <span className="h-4 w-[3px] bg-[#5b95d8]" />
            <button aria-label="Visibility of document" className="mr-[2px] flex w-[18px] justify-center">
              <Eye />
            </button>
            <span className="flex h-[14px] items-center bg-[#929292] pr-[6px] pl-[3px] text-[10px] leading-[14px] font-semibold text-white">
              <Assembly />
              <span className="pl-[10px]">CNC Clamp v6 v40</span>
            </span>
            <input
              type="radio"
              defaultChecked
              aria-label="Activate document"
              className="ml-1 h-[11px] w-[11px] appearance-none rounded-full border border-[#8f94a8] bg-[#3b4054] shadow-[inset_0_0_0_2px_#e8eaf2]"
            />
          </div>
        </li>
        {nodes.map((node, i) => (
          <TreeRow key={i} node={node} />
        ))}
      </ul>
    </div>
    <div className="ml-1 flex h-5 items-center border border-[#d9d9d9] bg-[#f2f2f2] pr-2 pl-[19px] text-[9px] text-[#555]">
      <h2 className="flex-1">COMMENTS</h2>
      <button aria-label="Expand comments">
        <PlusDot />
      </button>
    </div>
  </aside>
);

const PlusDot = () => (
  <Svg box="0 0 8 8" className="h-2 w-2">
    <circle cx="4" cy="4" r="4" fill="#333" />
    <path d="M2 4h4M4 2v4" stroke="#fff" />
  </Svg>
);

const edge = '#47443e';

const Model = () => (
  <svg viewBox="45 148 1230 552" className="absolute inset-0 h-full w-full" fill="none" role="img" aria-label="Clamp body">
    <defs>
      <linearGradient id="floor" gradientUnits="userSpaceOnUse" x1="640" y1="381" x2="662" y2="420">
        <stop offset="0" stopColor="#777368" />
        <stop offset=".4" stopColor="#8a8478" />
        <stop offset="1" stopColor="#9b9385" />
      </linearGradient>
      <linearGradient id="floorFade" gradientUnits="userSpaceOnUse" x1="690" y1="352" x2="770" y2="306">
        <stop offset="0" stopColor="#9b9385" stopOpacity="0" />
        <stop offset="1" stopColor="#9c9587" />
      </linearGradient>
      <linearGradient id="floorLeft" gradientUnits="userSpaceOnUse" x1="530" y1="455" x2="630" y2="397">
        <stop offset="0" stopColor="#9c9587" />
        <stop offset="1" stopColor="#9b9385" stopOpacity="0" />
      </linearGradient>
      <linearGradient id="wall" gradientUnits="userSpaceOnUse" x1="600" y1="344" x2="624" y2="385">
        <stop offset="0" stopColor="#7f7b70" />
        <stop offset=".55" stopColor="#78726a" />
        <stop offset="1" stopColor="#605c55" />
      </linearGradient>
      <linearGradient id="wallFade" gradientUnits="userSpaceOnUse" x1="480" y1="440" x2="640" y2="350">
        <stop offset="0" stopColor="#8f877c" />
        <stop offset="1" stopColor="#8f877c" stopOpacity="0" />
      </linearGradient>
      <linearGradient id="round" gradientUnits="userSpaceOnUse" x1="456" y1="467" x2="447" y2="483">
        <stop offset="0" stopColor="#968f81" />
        <stop offset=".2" stopColor="#bdb6a6" />
        <stop offset=".38" stopColor="#958e80" />
        <stop offset=".65" stopColor="#d2cdbc" />
        <stop offset="1" stopColor="#b6b5ad" />
      </linearGradient>
      <linearGradient id="front" gradientUnits="userSpaceOnUse" x1="480" y1="495" x2="450" y2="560">
        <stop offset="0" stopColor="#6b6c66" />
        <stop offset=".45" stopColor="#8a8c86" />
        <stop offset="1" stopColor="#989b96" />
      </linearGradient>
      <linearGradient id="hump" x1="0" y1=".6" x2="1" y2=".3">
        <stop offset="0" stopColor="#aca593" />
        <stop offset=".55" stopColor="#d3d5cd" />
        <stop offset="1" stopColor="#a6a89f" />
      </linearGradient>
      <linearGradient id="side" gradientUnits="userSpaceOnUse" x1="590" y1="600" x2="960" y2="400">
        <stop offset="0" stopColor="#7d786c" />
        <stop offset=".35" stopColor="#7f776d" />
        <stop offset=".65" stopColor="#7d786e" />
        <stop offset=".85" stopColor="#83796f" />
        <stop offset="1" stopColor="#7e786d" />
      </linearGradient>
      <linearGradient id="slotEnd" gradientUnits="userSpaceOnUse" x1="743" y1="0" x2="797" y2="0">
        <stop offset="0" stopColor="#79736d" />
        <stop offset=".6" stopColor="#a3a19f" />
        <stop offset="1" stopColor="#858079" />
      </linearGradient>
      <linearGradient id="slotWall" gradientUnits="userSpaceOnUse" x1="637" y1="0" x2="743" y2="0">
        <stop offset="0" stopColor="#837a74" />
        <stop offset=".4" stopColor="#7c766e" />
        <stop offset="1" stopColor="#7d7a6e" />
      </linearGradient>
    </defs>
    <g stroke={edge} strokeWidth=".7" strokeLinejoin="round">
      {/* base plate */}
      <path d="M755 290 777 277.500 956 379.500 920 399 820 372 654 465 602.500 495 523 449 640 370Z" fill="url(#floor)" />
      <path d="M755 290 777 277.500 956 379.500 920 399 820 372 654 465 602.500 495 523 449 640 370Z" fill="url(#floorFade)" stroke="none" />
      <path d="M755 290 820 372 654 465 602.500 495 523 449 640 370Z" fill="url(#floorLeft)" stroke="none" />
      <path d="M777 277.500Q779 276 782 278L957 378 955 380.500Z" fill="#d4d5cf" strokeWidth=".4" />
      {/* slot */}
      <path d="M654 465C640 464 627 456 627.500 446 628 440 632 436 637 433L743 373C752 366 775 363 789 373 795 377 798 382 797 384Z" fill="url(#slotWall)" />
      <path d="M743 373C752 366 775 363 789 373 795 377 798 382 797 384L743 413Z" fill="url(#slotEnd)" />
      <path d="M637.500 433v28C631 458 627 452 627.500 446 628 440 632 436 637.500 433Z" fill="#87827a" />
      {/* left rail */}
      <path d="M443 408 670 278.500 690 291 471 419Z" fill="#a39b8b" />
      <path d="M670 278.500C684 269 710 262 727 273.500L752 288C740 276 712 276 690 291Z" fill="url(#hump)" />
      <path d="M471 419 690 291C709 279 738 276 751 287.500 758 294 763 301 765.500 309.500L523 449Z" fill="url(#wall)" />
      <path d="M471 419 690 291 690 353 523 449Z" fill="url(#wallFade)" stroke="none" />
      {/* chamfer behind the jaw */}
      <path d="M443 408 471 419 523 449 602.500 495 610 514 588 493Z" fill="#78746a" />
      {/* right rail */}
      <path d="M602.500 495 825 367.500 846 381 610 515 591 495Z" fill="#9f9788" stroke="none" />
      <path d="M602.500 495 825 367.500 846 381 610 515" />
      <path d="M825 367.500C840 358 858 353 872 359L893 371C880 366 862 370 846 381Z" fill="url(#hump)" />
      <path
        d="M589.500 630V528L610 515 846 381C862 371 880 365 895 371.500 908 377 917 388 920 399L955 380Q959 378 960.500 383.500V395L925 415.500V447L903.500 459.500 893 455Z"
        fill="url(#side)"
      />
      <path d="M893 455 903 449v10.500" fill="#8b857a" />
      <path d="M589.500 528v39.500L605.500 548Q608 545.500 607.500 549L606.500 600Q606 603.500 602.500 601.500L589.500 600V630" strokeWidth="1.200" />
      {/* jaw */}
      <path d="M395 461V528L572 630V523L537 543Z" fill="url(#front)" />
      <path d="M395 528Q394.500 532 398 533.500L577 636 572 630Z" fill="#a29d92" strokeWidth=".6" />
      <path d="M587.500 493.500 610 515 589.500 528V630L581 635Q577 637 573.500 634L572 630V523L537 543.500V533C537 526 541 519 544.500 517.500Z" fill="#7f796e" />
      <path d="M359.500 432.500 537 532.500V543.500L359.500 442.500Z" fill="#8f8e84" />
      <path d="M369.500 417.500 544.500 517.500C540 520 537 526 537 533L359.500 433C359 425 364 420 369.500 417.500Z" fill="url(#round)" />
      <path d="M411.500 391.500 587.500 493.500 544.500 517.500 369.500 417.500Z" fill="#a39c8c" />
      <path d="M412.500 391.500 444 408 591 493 587.500 493.500Z" fill="#d0cfc8" strokeWidth=".4" />
    </g>
  </svg>
);

const ViewCube = () => (
  <svg viewBox="0 0 80 90" className="absolute top-[10px] right-[10px] h-[90px] w-[80px]" role="img" aria-label="View cube">
    <defs>
      <filter id="soft" x="-50%" y="-50%" width="200%" height="200%">
        <feGaussianBlur stdDeviation="3" />
      </filter>
    </defs>
    <path d="m12 62 26-10 26 12-24 16z" fill="#000" opacity=".28" filter="url(#soft)" />
    <path d="m13 25 27-13 27 12-27 16z" fill="#f6f6f6" stroke="#bdbdbd" />
    <path d="m13 25 27 15v33L15 56z" fill="#f0f0f0" stroke="#bdbdbd" />
    <path d="m67 24-27 16v33l26-17z" fill="#ebebeb" stroke="#bdbdbd" />
    <path d="M11 18 14 55" stroke="#8d8ee8" strokeWidth="1.200" />
    <path d="M14 55 43 74" stroke="#e8a0a0" strokeWidth="1.200" />
    <g fontFamily="Open Sans, sans-serif" fontSize="6" fontWeight="600" fill="#999" textAnchor="middle">
      <text transform="translate(40 28) rotate(25) skewX(-30)">TOP</text>
      <text transform="translate(27 51) skewY(27)">FRONT</text>
      <text transform="translate(53 52) skewY(-30)">RIGHT</text>
    </g>
    <g fontFamily="Open Sans, sans-serif" fontSize="11" textAnchor="middle">
      <text x="10" y="18" fill="#7b7ce0">Z</text>
      <text x="48" y="83" fill="#f08080">X</text>
    </g>
  </svg>
);

const NavBar = () => (
  <div className="absolute bottom-[6px] left-1/2 flex h-[19px] -translate-x-1/2 items-center gap-[7px] bg-[#f1f1f1] pr-1 pl-px">
    <button aria-label="Orbit" className="-mr-[2px] flex items-center gap-[3px]">
      <Svg box="0 0 14 14" className="h-[14px] w-[14px]">
        <ellipse cx="7" cy="7" rx="6" ry="2.600" stroke="#8b93a2" />
        <ellipse cx="7" cy="7" rx="2.600" ry="6" stroke="#8b93a2" />
        <path d="M7 5v4M5 7h4" stroke="#555" />
      </Svg>
      <Caret />
    </button>
    <button aria-label="Look at">
      <Svg box="0 0 14 14" className="h-[14px] w-[14px]">
        <path d="M1.500 5.500h11v7h-11zM3 5V2h2v1h7v2" stroke="#7f7f88" />
        <path d="M3 7h8v4H3z" fill="#a4a4ae" stroke="#7f7f88" />
      </Svg>
    </button>
    <button aria-label="Pan">
      <Svg box="0 0 14 14" className="h-[14px] w-[14px]">
        <path d="M4 9 1.500 6.500Q1 5 2.500 5.500L4.500 7 3.500 3Q4 1.500 5 3l1 3V1.500Q7 .5 7.500 1.500V6L9 2Q10 1.500 10 2.500L9.500 6.500 11.500 4Q13 4 12 5.500L10.500 9.500 9.500 13H5.500z" fill="#fff" stroke="#777" strokeWidth=".9" />
      </Svg>
    </button>
    <button aria-label="Zoom">
      <Svg box="0 0 14 14" className="h-[14px] w-[14px]">
        <circle cx="5.500" cy="5.500" r="4" fill="#f8f8fa" stroke="#888" />
        <path d="m8.500 8.500 4 4.500" stroke="#444" strokeWidth="2" />
        <path d="M12 0v4M10 2h4M10 6h3" stroke="#666" strokeWidth=".8" />
      </Svg>
    </button>
    <button aria-label="Fit" className="-mr-[2px] flex items-center gap-[3px]">
      <Svg box="0 0 14 14" className="h-[14px] w-[14px]">
        <circle cx="6" cy="6" r="4.500" fill="#f8f8fa" stroke="#888" />
        <path d="M4 4h4v4H4z" fill="#ccd" stroke="#99a" />
        <path d="m9.500 9.500 3.500 3.500" stroke="#444" strokeWidth="2" />
      </Svg>
      <Caret />
    </button>
    <button aria-label="Display settings" className="-mr-[2px] flex items-center gap-px">
      <Svg box="0 0 14 14" className="h-[14px] w-[14px]">
        <path d="M1 1.500h12v8.500H1z" fill="#7e9cc8" stroke="#6e7684" />
        <path d="M5 10.500h4v1.500h2v1.500H3V12h2z" fill="#8a8f9a" />
      </Svg>
      <Caret />
    </button>
    <button aria-label="Grid settings" className="-mr-[2px] flex items-center gap-px">
      <Svg box="0 0 14 14" className="h-[14px] w-[14px]">
        <path d="M1 1h12v12H1z" fill="#a9abb2" />
        <path d="M1 1h12v12H1zM1 4h12M1 7h12M1 10h12M4 1v12M7 1v12M10 1v12" stroke="#8b8e96" strokeWidth=".8" />
      </Svg>
      <Caret />
    </button>
    <button aria-label="Viewports" className="flex items-center gap-px">
      <Svg box="0 0 14 14" className="h-[14px] w-[14px]">
        <path d="M1 2h12v10H1z" fill="#8fb0dc" stroke="#64748c" />
        <path d="M7 2v10M1 7h12" stroke="#64748c" strokeWidth="1.500" />
      </Svg>
      <Caret />
    </button>
  </div>
);

const transport: [string, string][] = [
  ['Go to start', 'M1 1h1.500v10H1zM11 1v10L3 6z'],
  ['Step back', 'M8 1v10L0 6zM9.500 4H11v4H9.500z'],
  ['Play', 'M2 0v12l9-6z'],
  ['Step forward', 'M4 1v10l8-5zM1 4h1.500v4H1z'],
  ['Go to end', 'M1 1v10l8-5zM9.500 1H11v10H9.500z'],
];

const steps = segments.flatMap((s) => s.steps.split(''));

const Timeline = () => (
  <footer className="shrink-0 border-t-2 border-[#cfcfcf] bg-[#f0f0f0]">
    <div className="flex">
      <div className="w-[111px] shrink-0">
        <div className="ml-1 h-[5px] w-[132px] rounded-r-[3px] bg-[#c6c6c6]" />
        <div className="mt-3 flex gap-2 pl-[9px]">
          {transport.map(([label, d]) => (
            <button key={label} aria-label={label}>
              <Svg box="0 0 12 12" className="h-3 w-3">
                <path d={d} fill="#666" />
              </Svg>
            </button>
          ))}
        </div>
      </div>
      <div className="min-w-0 flex-1 border-b border-[#dcdcdc] pt-[6px] pb-1 pl-1">
        <div className="grid grid-cols-[repeat(55,minmax(0,1fr))]">
          {segments.map((s, i) => (
            <span key={i} className={`mx-[2px] h-[5px] ${s.color}`} style={{ gridColumn: `span ${s.steps.length}` }} />
          ))}
          {steps.map((s, i) => {
            const Icon = stepIcons[s];
            return (
              <button key={i} aria-label={`Feature ${i + 1}`} className="flex h-[17px] items-center justify-center">
                <Icon />
              </button>
            );
          })}
          {steps.map((_, i) => (
            <span key={i} className={`relative flex h-[6px] justify-center border-b ${i === MARKER + 1 ? 'border-[#777]' : 'border-[#bdbdbd]'}`}>
              {i === MARKER ? (
                <span className="absolute top-[2px] flex h-2 w-2 items-center bg-[#777] px-px">
                  <span className="h-[2px] w-full bg-[#f0f0f0]" />
                </span>
              ) : (
                <span className="mt-px w-px bg-[#bdbdbd]" />
              )}
            </span>
          ))}
        </div>
      </div>
      <button aria-label="Timeline settings" className="mt-4 mr-[10px] ml-[18px] h-[14px] w-[14px]">
        <Gear className="h-[14px] w-[14px]" />
      </button>
    </div>
    <div className="flex h-5 items-center gap-2 pl-[5px] text-[9px] text-[#555]">
      <button aria-label="Expand text commands">
        <PlusDot />
      </button>
      <h2>TEXT COMMANDS</h2>
    </div>
  </footer>
);

const App: React.FC = () => (
  <div className="flex h-screen min-h-[700px] bg-white px-[45px] pt-[30px] pb-[60px] font-['Open_Sans',sans-serif]">
    <div className="flex min-w-0 flex-1 flex-col overflow-hidden rounded-[10px] bg-white shadow-[0_14px_26px_rgba(0,0,0,0.42),0_0_2px_rgba(0,0,0,0.5)]">
      <TitleBar />
      <DocumentBar />
      <Ribbon />
      <main className="relative flex min-h-0 flex-1">
        <Model />
        <Browser />
        <ViewCube />
        <NavBar />
        <button aria-label="Assistant" className="absolute right-[11px] bottom-[6px]">
          <Svg box="0 0 12 12" className="h-3 w-3">
            <path d="M6 0a6 6 0 0 1 6 6v6H6A6 6 0 0 1 6 0Z" fill="#111" />
            <path d="M2.500 7.500 8 4v1.500L4 8M6 8l3.500-2" stroke="#fff" strokeWidth=".9" />
          </Svg>
        </button>
      </main>
      <Timeline />
    </div>
  </div>
);

export default App;
